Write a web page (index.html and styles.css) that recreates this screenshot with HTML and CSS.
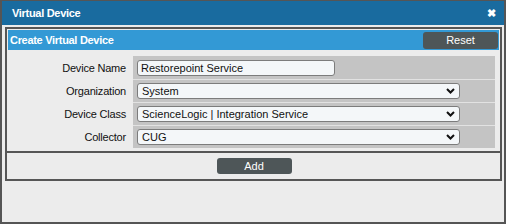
FILE: index.html
```html
<!DOCTYPE html>
<html lang="en">
<head>
    <meta charset="UTF-8">
    <title>Virtual Device</title>
    <link rel="stylesheet" href="styles.css">
</head>
<body>
    <div class="dialog">
        <div class="title-bar">
            <span class="title">Virtual Device</span>
            <span class="close">&#x2716;</span>
        </div>

        <div class="dialog-body">
            <div class="panel">
                <div class="panel-header">
                    <span>Create Virtual Device</span>
                    <button class="btn reset-btn">Reset</button>
                </div>

                <div class="form">
                    <div class="label">Device Name</div>
                    <div class="field"><div class="text-input">Restorepoint Service</div></div>

                    <div class="label">Organization</div>
                    <div class="field">
                        <div class="select">
                            <span>System</span>
                            <svg class="chevron" width="9" height="6" viewBox="0 0 9 6"><path d="M1 1l3.5 3.5L8 1" fill="none" stroke="#111" stroke-width="2"/></svg>
                        </div>
                    </div>

                    <div class="label">Device Class</div>
                    <div class="field">
                        <div class="select">
                            <span>ScienceLogic | Integration Service</span>
                            <svg class="chevron" width="9" height="6" viewBox="0 0 9 6"><path d="M1 1l3.5 3.5L8 1" fill="none" stroke="#111" stroke-width="2"/></svg>
                        </div>
                    </div>

                    <div class="label">Collector</div>
                    <div class="field">
                        <div class="select">
                            <span>CUG</span>
                            <svg class="chevron" width="9" height="6" viewBox="0 0 9 6"><path d="M1 1l3.5 3.5L8 1" fill="none" stroke="#111" stroke-width="2"/></svg>
                        </div>
                    </div>
                </div>

                <div class="panel-footer">
                    <button class="btn add-btn">Add</button>
                </div>
            </div>
        </div>
    </div>
</body>
</html>
```

FILE: styles.css
```css
body {
    margin: 0;
    font-family: "Liberation Sans", Arial, sans-serif;
    font-size: 11px;
    color: #111;
}

.dialog {
    box-sizing: border-box;
    width: 506px;
    height: 224px;
    background: #ececec;
    border: 2px solid #555;
    border-top-width: 1px;
}

.title-bar {
    display: flex;
    justify-content: space-between;
    align-items: center;
    height: 24px;
    padding: 0 8px 0 10px;
    background: #196b9f;
    color: #fff;
    font-weight: bold;
}

.title {
    letter-spacing: -0.3px;
}

.close {
    font-size: 11px;
}

.dialog-body {
    padding: 2px 2px 0 3px;
}

.panel {
    border: 2px solid #565656;
}

.panel-header {
    display: flex;
    justify-content: space-between;
    align-items: center;
    height: 20px;
    margin: 1px 1px 0 1px;
    padding-left: 2px;
    background: #3399d5;
    color: #fff;
    font-weight: bold;
    letter-spacing: -0.3px;
}

.btn {
    width: 75px;
    border: none;
    border-radius: 3px;
    background: #4e5658;
    color: #fff;
    font-family: "Liberation Sans", Arial, sans-serif;
    font-size: 11px;
    padding: 0;
    cursor: pointer;
}

.reset-btn {
    height: 17px;
    margin-right: 1px;
}

.form {
    display: grid;
    grid-template-columns: 126px 1fr;
    padding: 6px 5px 3px 0;
}

.label {
    display: flex;
    align-items: center;
    justify-content: flex-end;
    padding-right: 7px;
    height: 22px;
    border-top: 1px solid transparent;
    letter-spacing: -0.2px;
}

.field {
    display: flex;
    align-items: center;
    height: 22px;
    padding-left: 4px;
    background: #c4c4c4;
    border-top: 1px solid #e2e2e2;
}

.field:nth-child(2),
.label:nth-child(1) {
    border-top: none;
    height: 23px;
}

.text-input,
.select {
    box-sizing: border-box;
    height: 16px;
    padding: 0 4px;
    background: #f4f7f9;
    border: 1px solid #7c7c7c;
    border-radius: 3px;
    line-height: 14px;
}

.text-input {
    width: 198px;
    padding-left: 3px;
}

.select {
    display: flex;
    justify-content: space-between;
    align-items: center;
    width: 323px;
    padding-right: 4px;
}

.panel-footer {
    display: flex;
    justify-content: center;
    padding: 5px 0 5px 0;
    border-top: 2px solid #565656;
}

.add-btn {
    height: 16px;
    margin-left: 1px;
}
```
